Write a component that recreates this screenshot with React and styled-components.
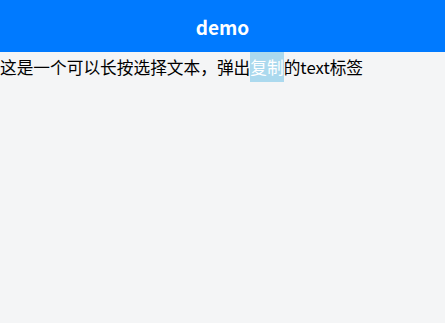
import React from 'react'
import styled, { createGlobalStyle } from 'styled-components'

const GlobalStyle = createGlobalStyle`
  html, body {
    margin: 0;
    padding: 0;
    background: #f4f5f6;
  }
  body {
    font-family: "Noto Sans CJK SC", "Noto Sans", sans-serif;
  }
`

const Page = styled.div`
  min-height: 323px;
  background: #f4f5f6;
  display: flex;
  flex-direction: column;
`

const NavBar = styled.header`
  height: 52px;
  background: #007aff;
  display: flex;
  align-items: center;
  justify-content: center;
`

const Title = styled.h1`
  margin: 0;
  color: #ffffff;
  font-size: 19px;
  font-weight: 700;
  line-height: 1;
`

const Content = styled.p`
  margin: 0;
  font-size: 16.7px;
  line-height: 30px;
  color: #000000;
  white-space: nowrap;
`

const Selected = styled.span`
  display: inline-block;
  background: #abd9ee;
  color: #ffffff;
`

export default function App() {
  return (
    <Page>
      <GlobalStyle />
      <NavBar>
        <Title>demo</Title>
      </NavBar>
      <Content>
        这是一个可以长按选择文本，弹出<Selected>复制</Selected>的text标签
      </Content>
    </Page>
  )
}
